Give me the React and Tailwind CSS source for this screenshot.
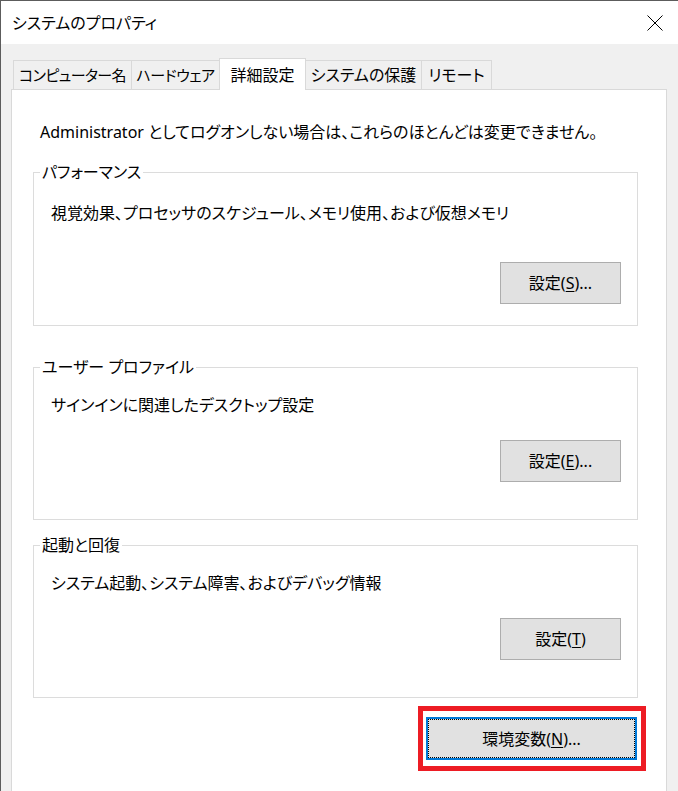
import React from 'react';

const font = "font-['Noto_Sans','Noto_Sans_CJK_JP',sans-serif] [font-feature-settings:'palt']";

const tabs = [
    { label: 'コンピューター名', w: 'w-[119px]', fs: 'text-[15px] tracking-[-0.6px]' },
    { label: 'ハードウェア', w: 'w-[89px]', fs: 'text-[15px] tracking-[-0.4px]' },
    { label: '詳細設定', w: 'w-[87px]', fs: 'text-[16px]', active: true },
    { label: 'システムの保護', w: 'w-[117px]', fs: 'text-[16px]' },
    { label: 'リモート', w: 'w-[71px]', fs: 'text-[16px]' },
];

function WinButton({ label, keyChar, tail }) {
    return (
        <button className="w-[121px] h-[42px] bg-[#e1e1e1] border border-[#adadad] text-[16px] text-black flex items-center justify-center">
            <span>
                {label}(<span className="underline underline-offset-2">{keyChar}</span>){tail}
            </span>
        </button>
    );
}

function Group({ title, text, button, pt, gap, pb, mt }) {
    return (
        <fieldset className={`w-[605px] border border-[#dcdcdc] pl-[17px] pr-[16px] ${pt} ${pb} ${mt}`}>
            <legend className="ml-[-11px] px-[2px] leading-[24px] text-[16px]">{title}</legend>
            <div className="leading-[24px] text-[16px]">{text}</div>
            <div className={`flex justify-end ${gap}`}>{button}</div>
        </fieldset>
    );
}

export default function App() {
    return (
        <div className={`w-[678px] h-[791px] bg-[#f0f0f0] border-t border-l border-[#5c5c5c] overflow-hidden flex flex-col text-black ${font}`}>
            {/* Title bar */}
            <div className="h-[43px] bg-white flex items-center justify-between pl-[11px] pr-[15px] shrink-0">
                <span className="text-[16px]">システムのプロパティ</span>
                <svg width="16" height="16" viewBox="0 0 16 16" className="mt-[1px]">
                    <path d="M0.5 0.5 L15.5 15.5 M15.5 0.5 L0.5 15.5" stroke="#000" strokeWidth="1" fill="none" />
                </svg>
            </div>

            {/* Tabs */}
            <div className="h-[31px] mt-[14px] pl-[12px] flex items-end shrink-0">
                {tabs.map((t, i) => (
                    <div
                        key={t.label}
                        className={`${t.w} ${t.fs} ${i > 0 ? '-ml-px' : ''} flex items-center justify-center whitespace-nowrap border-t border-l border-r border-[#d9d9d9] ${
                            t.active ? 'h-[32px] -mb-px bg-white relative z-10' : 'h-[29px] bg-[#f0f0f0]'
                        }`}
                    >
                        {t.label}
                    </div>
                ))}
            </div>

            {/* Panel */}
            <div className="ml-[10px] w-[656px] flex-1 bg-white border border-b-0 border-[#d9d9d9] pl-[21px] pt-[30px] flex flex-col items-start">
                <div className="ml-[7px] leading-[24px] text-[16px] mb-[16px]">
                    Administrator としてログオンしない場合は、これらのほとんどは変更できません。
                </div>

                <Group
                    title="パフォーマンス"
                    text="視覚効果、プロセッサのスケジュール、メモリ使用、および仮想メモリ"
                    button={<WinButton label="設定" keyChar="S" tail="..." />}
                    pt="pt-[17px]"
                    gap="mt-[37px]"
                    pb="pb-[21px]"
                    mt=""
                />

                <Group
                    title="ユーザー プロファイル"
                    text="サインインに関連したデスクトップ設定"
                    button={<WinButton label="設定" keyChar="E" tail="..." />}
                    pt="pt-[14px]"
                    gap="mt-[23px]"
                    pb="pb-[37px]"
                    mt="mt-[29px]"
                />

                <Group
                    title="起動と回復"
                    text="システム起動、システム障害、およびデバッグ情報"
                    button={<WinButton label="設定" keyChar="T" tail="" />}
                    pt="pt-[14px]"
                    gap="mt-[23px]"
                    pb="pb-[37px]"
                    mt="mt-[13px]"
                />

                {/* highlighted button */}
                <div className="self-end mr-[20px] mt-[8px] w-[228px] h-[65px] border-[5px] border-[#ed1c24] pl-[3px] pt-[6px]">
                    <button className="w-[211px] h-[43px] bg-[#e1e1e1] border-2 border-[#0078d7] p-0">
                        <div className="w-full h-full border border-dotted border-black flex items-center justify-center text-[16px]">
                            <span>
                                環境変数(<span className="underline underline-offset-2">N</span>)...
                            </span>
                        </div>
                    </button>
                </div>
            </div>
        </div>
    );
}
